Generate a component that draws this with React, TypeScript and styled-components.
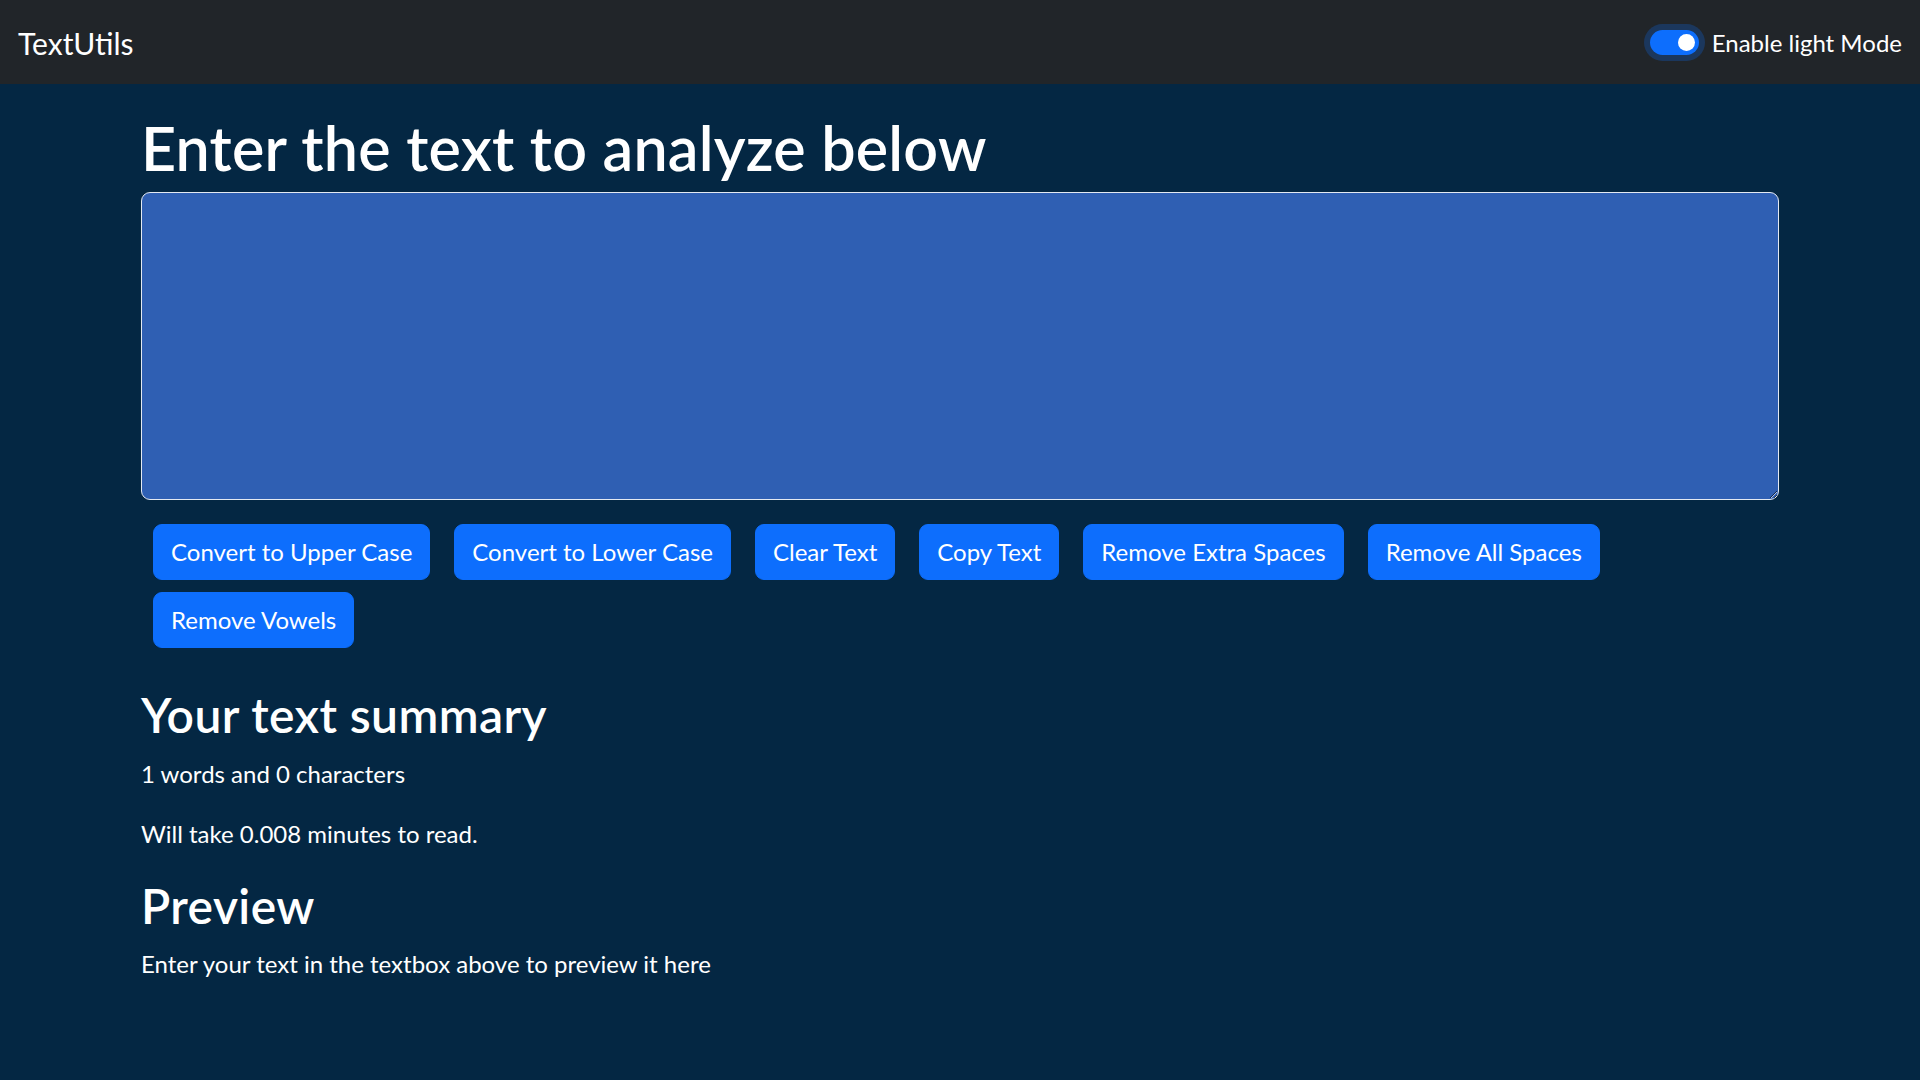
import React, { useState } from "react";
import styled, { createGlobalStyle } from "styled-components";

const GlobalStyle = createGlobalStyle`
  html, body {
    margin: 0;
    padding: 0;
    background: #042743;
  }
  body {
    font-family: Lato, "Noto Sans", "Liberation Sans", sans-serif;
    color: #ffffff;
  }
  * {
    box-sizing: border-box;
  }
`;

const buttons = [
  "Convert to Upper Case",
  "Convert to Lower Case",
  "Clear Text",
  "Copy Text",
  "Remove Extra Spaces",
  "Remove All Spaces",
  "Remove Vowels",
];

const App: React.FC = () => {
  const [text, setText] = useState("");
  const [dark, setDark] = useState(true);

  const words = text.split(" ").length;

  return (
    <Page>
      <GlobalStyle />
      <Navbar>
        <Brand>TextUtils</Brand>
        <SwitchLabel>
          <SwitchTrack on={dark} onClick={() => setDark(!dark)}>
            <SwitchKnob on={dark} />
          </SwitchTrack>
          Enable light Mode
        </SwitchLabel>
      </Navbar>
      <Container>
        <Title>Enter the text to analyze below</Title>
        <TextBox value={text} onChange={(e) => setText(e.target.value)} />
        <ButtonRow>
          {buttons.map((label) => (
            <ActionButton key={label}>{label}</ActionButton>
          ))}
        </ButtonRow>
        <SectionTitle first>Your text summary</SectionTitle>
        <Para>
          {words} words and {text.length} characters
        </Para>
        <Para>Will take {(0.008 * words).toFixed(3)} minutes to read.</Para>
        <SectionTitle>Preview</SectionTitle>
        <Para>
          {text.length > 0 ? text : "Enter your text in the textbox above to preview it here"}
        </Para>
      </Container>
    </Page>
  );
};

export default App;

const Page = styled.div`
  min-height: 1080px;
  background: #042743;
`;

const Navbar = styled.nav`
  height: 84px;
  background: #212529;
  display: flex;
  align-items: center;
  justify-content: space-between;
  padding: 0 18px 0 18px;
`;

const Brand = styled.div`
  font-size: 30px;
  line-height: 1.5;
  color: #ffffff;
  margin-top: 3px;
`;

const SwitchLabel = styled.label`
  display: flex;
  align-items: center;
  gap: 13px;
  font-size: 24px;
  color: #ffffff;
`;

const SwitchTrack = styled.span<{ on: boolean }>`
  position: relative;
  width: 49px;
  height: 25px;
  border-radius: 13px;
  background: ${(p) => (p.on ? "#0d6efd" : "#ffffff")};
  box-shadow: 0 0 0 6px rgba(13, 110, 253, 0.25);
  display: inline-block;
  cursor: pointer;
`;

const SwitchKnob = styled.span<{ on: boolean }>`
  position: absolute;
  top: 4px;
  left: ${(p) => (p.on ? "28px" : "4px")};
  width: 17px;
  height: 17px;
  border-radius: 50%;
  background: ${(p) => (p.on ? "#ffffff" : "#86b7fe")};
`;

const Container = styled.main`
  width: 1638px;
  margin: 0 auto;
  padding-top: 27px;
`;

const Title = styled.h1`
  margin: 0 0 8px;
  font-size: 61px;
  font-weight: 600;
  letter-spacing: 0.2px;
  line-height: 1.2;
`;

const TextBox = styled.textarea`
  display: block;
  width: 100%;
  height: 308px;
  padding: 9px 18px;
  font-family: inherit;
  font-size: 24px;
  line-height: 1.5;
  color: #ffffff;
  background: #2f5fb3;
  border: 1.5px solid #e4e9f2;
  border-radius: 9px;
  outline: none;
  resize: vertical;
`;

const ButtonRow = styled.div`
  display: flex;
  flex-wrap: wrap;
  gap: 12px 24px;
  margin-top: 24px;
  padding: 0 12px;
`;

const ActionButton = styled.button`
  height: 56px;
  padding: 9px 17px;
  font-family: inherit;
  font-size: 24px;
  line-height: 1.5;
  color: #ffffff;
  background: #0d6efd;
  border: 1.5px solid #0d6efd;
  border-radius: 9px;
  cursor: pointer;
`;

const SectionTitle = styled.h2<{ first?: boolean }>`
  margin: ${(p) => (p.first ? "38px" : "25px")} 0 12px;
  font-size: 48px;
  font-weight: 600;
  letter-spacing: 0.4px;
  line-height: 1.2;
`;

const Para = styled.p`
  margin: 0 0 24px;
  font-size: 24px;
  line-height: 1.5;
`;
